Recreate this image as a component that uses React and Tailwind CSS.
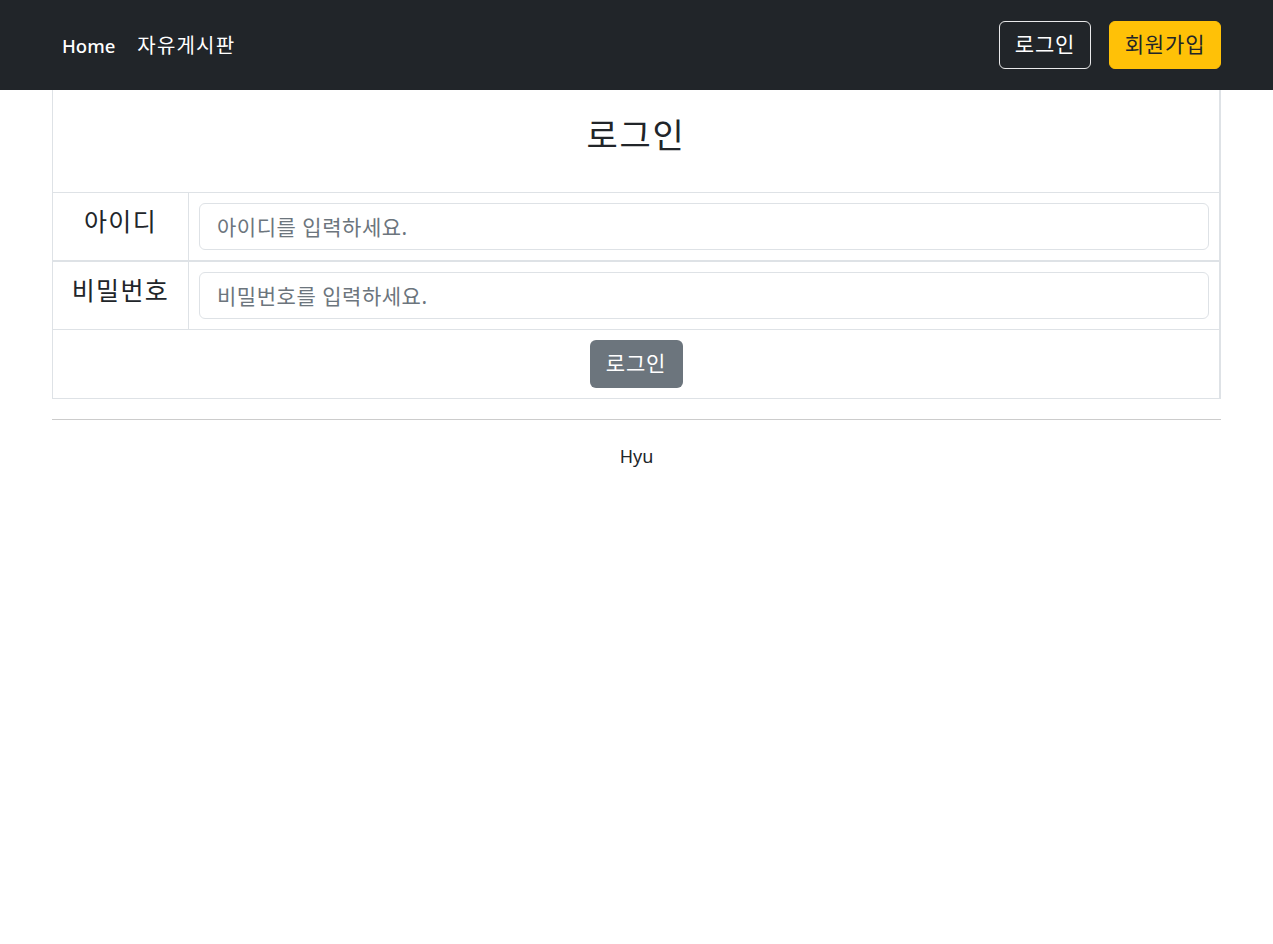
export default function App() {
  const font = { fontFamily: '"Noto Sans", "Noto Sans CJK KR", sans-serif' };
  return (
    <div className="min-h-screen bg-white text-[#212529]" style={font}>
      <nav className="h-[90px] bg-[#212529] flex items-center justify-between pl-[62px] pr-[52px]">
        <div className="flex items-center gap-[22px] text-white pt-[2px]">
          <span className="font-medium text-[18.5px]">Home</span>
          <span className="text-[20px] tracking-[0.06em]">자유게시판</span>
        </div>
        <div className="flex items-center gap-[18px]">
          <button className="w-[92px] h-[48px] text-[21px] tracking-[0.04em] leading-[1.5] text-white border border-white/90 rounded-[6px]">로그인</button>
          <button className="w-[112px] h-[48px] text-[21px] tracking-[0.04em] leading-[1.5] text-[#212529] bg-[#ffc107] border border-[#ffc107] rounded-[6px]">회원가입</button>
        </div>
      </nav>
      <div className="mx-[52px] border-l border-b border-r-2 border-[#dee2e6]">
        <div className="h-[103px] flex justify-center pt-[25px] border-b border-[#dee2e6]">
          <span className="text-[34px] tracking-[0.05em] leading-[1.2]">로그인</span>
        </div>
        <div className="flex border-b-2 border-[#dee2e6]">
          <div className="w-[136px] border-r border-[#dee2e6] text-center text-[25px] tracking-[0.055em] leading-[1.5] pt-[10px]">아이디</div>
          <div className="flex-1 p-[10px]">
            <input className="w-full h-[47px] px-[17px] text-[21px] tracking-[0.025em] border border-[#dee2e6] rounded-[6px] placeholder:text-[#6c757d] outline-none" style={font} placeholder="아이디를 입력하세요." />
          </div>
        </div>
        <div className="flex border-b border-[#dee2e6]">
          <div className="w-[136px] border-r border-[#dee2e6] text-center text-[25px] tracking-[0.055em] leading-[1.5] pt-[10px]">비밀번호</div>
          <div className="flex-1 p-[10px]">
            <input type="text" className="w-full h-[47px] px-[17px] text-[21px] tracking-[0.025em] border border-[#dee2e6] rounded-[6px] placeholder:text-[#6c757d] outline-none" style={font} placeholder="비밀번호를 입력하세요." />
          </div>
        </div>
        <div className="flex justify-center p-[10px]">
          <button className="w-[93px] h-[48px] text-[21px] tracking-[0.04em] leading-[1.5] text-white bg-[#6c757d] rounded-[6px]">로그인</button>
        </div>
      </div>
      <hr className="mx-[52px] mt-[20px] border-t border-[#cccccc]" />
      <div className="text-center text-[18px] leading-[27px] mt-[23px]">Hyu</div>
    </div>
  );
}
